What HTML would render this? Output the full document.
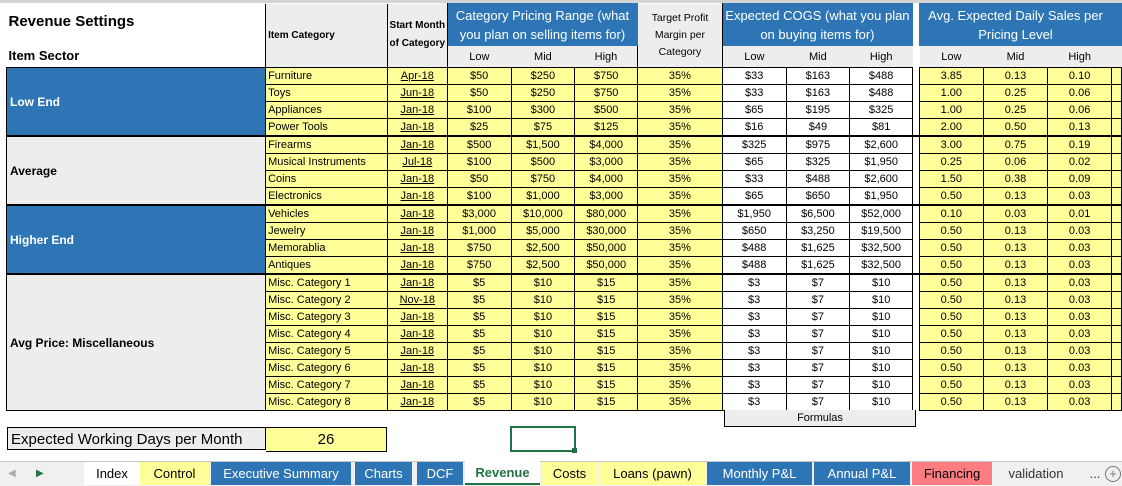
<!DOCTYPE html>
<html><head><meta charset="utf-8"><style>
body{margin:0;width:1122px;height:485px;overflow:hidden;background:#fff;font-family:"Liberation Sans",sans-serif;position:relative}
.grid{position:absolute;left:0;top:0;width:1122px;height:3px;background:#d4d4d4}
table{position:absolute;left:6px;top:3px;border-collapse:collapse;table-layout:fixed;font-size:11px}
td{padding:0;height:16px;text-align:center;border:1px solid #000;background:#ffff99;white-space:nowrap;overflow:hidden;line-height:16px;color:#000}
td.l{text-align:left;padding-left:2px}
td.w{background:#fff}
td.g{border:none;background:#fff}
td.u{text-decoration:underline}
.hb{background:#2e75b6;color:#fff;font-size:13px;line-height:19px;border:1px solid #2e75b6;white-space:normal;height:41px}
.hg{background:#ededed;border:1px solid #000;border-top:none;border-bottom:none;font-size:11px;line-height:17px;white-space:normal}
.sub{background:#ededed;border:none;font-size:11px;height:21px}
.sec1{background:#2e75b6;color:#fff;font-size:12px;font-weight:bold;text-align:left;padding-left:3px}
.sec2{background:#ededed;font-size:12px;font-weight:bold;text-align:left;padding-left:3px}
tr.t td{border-top:2px solid #000;height:15px}
.tabs{position:absolute;left:0;top:461px;width:1122px;height:24px;background:#f0f0f0;border-top:1px solid #c6c6c6;font-size:13px}
.tab{position:absolute;top:0;height:23px;line-height:23px;text-align:center;color:#fff}
</style></head><body>
<div class="grid"></div>
<table>
<colgroup><col style="width:260px"><col style="width:122px"><col style="width:60px"><col style="width:64px"><col style="width:64px"><col style="width:63px"><col style="width:85px"><col style="width:64px"><col style="width:64px"><col style="width:63px"><col style="width:7px"><col style="width:64px"><col style="width:65px"><col style="width:64px"><col style="width:10px"></colgroup>
<tr style="height:42px">
<td rowspan="2" style="background:#fff;border:none;border-bottom:1px solid #000;text-align:left;vertical-align:top;position:relative"><div style="position:absolute;left:2px;top:10px;font-size:15px;font-weight:bold">Revenue Settings</div><div style="position:absolute;left:2px;top:44px;font-size:13px;font-weight:bold">Item Sector</div></td>
<td rowspan="2" class="hg l" style="font-weight:bold;font-size:10px;border-left:1px solid #000">Item Category</td>
<td rowspan="2" class="hg" style="font-weight:bold;font-size:10px;line-height:18px">Start Month of Category</td>
<td colspan="3" class="hb">Category Pricing Range (what you plan on selling items for)</td>
<td rowspan="2" class="hg" style="font-size:10.5px">Target Profit Margin per Category</td>
<td colspan="3" class="hb">Expected COGS (what you plan on buying items for)</td>
<td rowspan="2" class="g"></td>
<td colspan="3" class="hb">Avg. Expected Daily Sales per Pricing Level</td>
<td class="hb"></td>
</tr>
<tr style="height:22px"><td class="sub">Low</td><td class="sub">Mid</td><td class="sub">High</td><td class="sub">Low</td><td class="sub">Mid</td><td class="sub">High</td><td class="sub">Low</td><td class="sub">Mid</td><td class="sub">High</td><td class="sub"></td></tr>

<tr><td rowspan="4" class="sec1">Low End</td><td class="l">Furniture</td><td class="u">Apr-18</td><td>$50</td><td>$250</td><td>$750</td><td>35%</td><td class="w">$33</td><td class="w">$163</td><td class="w">$488</td><td class="g"></td><td>3.85</td><td>0.13</td><td>0.10</td><td></td></tr>
<tr><td class="l">Toys</td><td class="u">Jun-18</td><td>$50</td><td>$250</td><td>$750</td><td>35%</td><td class="w">$33</td><td class="w">$163</td><td class="w">$488</td><td class="g"></td><td>1.00</td><td>0.25</td><td>0.06</td><td></td></tr>
<tr><td class="l">Appliances</td><td class="u">Jan-18</td><td>$100</td><td>$300</td><td>$500</td><td>35%</td><td class="w">$65</td><td class="w">$195</td><td class="w">$325</td><td class="g"></td><td>1.00</td><td>0.25</td><td>0.06</td><td></td></tr>
<tr><td class="l">Power Tools</td><td class="u">Jan-18</td><td>$25</td><td>$75</td><td>$125</td><td>35%</td><td class="w">$16</td><td class="w">$49</td><td class="w">$81</td><td class="g"></td><td>2.00</td><td>0.50</td><td>0.13</td><td></td></tr>

<tr class="t"><td rowspan="4" class="sec2">Average</td><td class="l">Firearms</td><td class="u">Jan-18</td><td>$500</td><td>$1,500</td><td>$4,000</td><td>35%</td><td class="w">$325</td><td class="w">$975</td><td class="w">$2,600</td><td class="g"></td><td>3.00</td><td>0.75</td><td>0.19</td><td></td></tr>
<tr><td class="l">Musical Instruments</td><td class="u">Jul-18</td><td>$100</td><td>$500</td><td>$3,000</td><td>35%</td><td class="w">$65</td><td class="w">$325</td><td class="w">$1,950</td><td class="g"></td><td>0.25</td><td>0.06</td><td>0.02</td><td></td></tr>
<tr><td class="l">Coins</td><td class="u">Jan-18</td><td>$50</td><td>$750</td><td>$4,000</td><td>35%</td><td class="w">$33</td><td class="w">$488</td><td class="w">$2,600</td><td class="g"></td><td>1.50</td><td>0.38</td><td>0.09</td><td></td></tr>
<tr><td class="l">Electronics</td><td class="u">Jan-18</td><td>$100</td><td>$1,000</td><td>$3,000</td><td>35%</td><td class="w">$65</td><td class="w">$650</td><td class="w">$1,950</td><td class="g"></td><td>0.50</td><td>0.13</td><td>0.03</td><td></td></tr>

<tr class="t"><td rowspan="4" class="sec1">Higher End</td><td class="l">Vehicles</td><td class="u">Jan-18</td><td>$3,000</td><td>$10,000</td><td>$80,000</td><td>35%</td><td class="w">$1,950</td><td class="w">$6,500</td><td class="w">$52,000</td><td class="g"></td><td>0.10</td><td>0.03</td><td>0.01</td><td></td></tr>
<tr><td class="l">Jewelry</td><td class="u">Jan-18</td><td>$1,000</td><td>$5,000</td><td>$30,000</td><td>35%</td><td class="w">$650</td><td class="w">$3,250</td><td class="w">$19,500</td><td class="g"></td><td>0.50</td><td>0.13</td><td>0.03</td><td></td></tr>
<tr><td class="l">Memorablia</td><td class="u">Jan-18</td><td>$750</td><td>$2,500</td><td>$50,000</td><td>35%</td><td class="w">$488</td><td class="w">$1,625</td><td class="w">$32,500</td><td class="g"></td><td>0.50</td><td>0.13</td><td>0.03</td><td></td></tr>
<tr><td class="l">Antiques</td><td class="u">Jan-18</td><td>$750</td><td>$2,500</td><td>$50,000</td><td>35%</td><td class="w">$488</td><td class="w">$1,625</td><td class="w">$32,500</td><td class="g"></td><td>0.50</td><td>0.13</td><td>0.03</td><td></td></tr>

<tr class="t"><td rowspan="8" class="sec2">Avg Price: Miscellaneous</td><td class="l">Misc. Category 1</td><td class="u">Jan-18</td><td>$5</td><td>$10</td><td>$15</td><td>35%</td><td class="w">$3</td><td class="w">$7</td><td class="w">$10</td><td class="g"></td><td>0.50</td><td>0.13</td><td>0.03</td><td></td></tr>
<tr><td class="l">Misc. Category 2</td><td class="u">Nov-18</td><td>$5</td><td>$10</td><td>$15</td><td>35%</td><td class="w">$3</td><td class="w">$7</td><td class="w">$10</td><td class="g"></td><td>0.50</td><td>0.13</td><td>0.03</td><td></td></tr>
<tr><td class="l">Misc. Category 3</td><td class="u">Jan-18</td><td>$5</td><td>$10</td><td>$15</td><td>35%</td><td class="w">$3</td><td class="w">$7</td><td class="w">$10</td><td class="g"></td><td>0.50</td><td>0.13</td><td>0.03</td><td></td></tr>
<tr><td class="l">Misc. Category 4</td><td class="u">Jan-18</td><td>$5</td><td>$10</td><td>$15</td><td>35%</td><td class="w">$3</td><td class="w">$7</td><td class="w">$10</td><td class="g"></td><td>0.50</td><td>0.13</td><td>0.03</td><td></td></tr>
<tr><td class="l">Misc. Category 5</td><td class="u">Jan-18</td><td>$5</td><td>$10</td><td>$15</td><td>35%</td><td class="w">$3</td><td class="w">$7</td><td class="w">$10</td><td class="g"></td><td>0.50</td><td>0.13</td><td>0.03</td><td></td></tr>
<tr><td class="l">Misc. Category 6</td><td class="u">Jan-18</td><td>$5</td><td>$10</td><td>$15</td><td>35%</td><td class="w">$3</td><td class="w">$7</td><td class="w">$10</td><td class="g"></td><td>0.50</td><td>0.13</td><td>0.03</td><td></td></tr>
<tr><td class="l">Misc. Category 7</td><td class="u">Jan-18</td><td>$5</td><td>$10</td><td>$15</td><td>35%</td><td class="w">$3</td><td class="w">$7</td><td class="w">$10</td><td class="g"></td><td>0.50</td><td>0.13</td><td>0.03</td><td></td></tr>
<tr><td class="l">Misc. Category 8</td><td class="u">Jan-18</td><td>$5</td><td>$10</td><td>$15</td><td>35%</td><td class="w">$3</td><td class="w">$7</td><td class="w">$10</td><td class="g"></td><td>0.50</td><td>0.13</td><td>0.03</td><td></td></tr>
</table>

<div style="position:absolute;left:724px;top:410px;width:190px;height:16px;background:#ededed;border:1px solid #000;border-top:none;font-size:11px;text-align:center;line-height:16px">Formulas</div>

<div style="position:absolute;left:7px;top:427px;height:23px;background:#ededed;border:1px solid #000;font-size:15px;line-height:23px;padding-left:3px;box-sizing:border-box;width:259px">Expected Working Days per Month</div>
<div style="position:absolute;left:266px;top:427px;width:120px;height:23px;background:#ffff99;border:1px solid #000;border-left:none;font-size:15px;line-height:23px;text-align:center">26</div>
<div style="position:absolute;left:510px;top:426px;width:62px;height:22px;border:2px solid #217346"></div>
<div style="position:absolute;left:572px;top:448px;width:5px;height:5px;background:#217346"></div>

<div class="tabs">
<div style="position:absolute;left:8px;top:0;line-height:23px;color:#aaa;font-size:10px">◀</div>
<div style="position:absolute;left:36px;top:0;line-height:23px;color:#217346;font-size:10px">▶</div>
<div class="tab" style="left:84px;width:56px;background:#fff;color:#000">Index</div>
<div class="tab" style="left:140px;width:69px;background:#ffff99;color:#000">Control</div>
<div class="tab" style="left:211px;width:140px;background:#2e75b6">Executive Summary</div>
<div class="tab" style="left:355px;width:57px;background:#2e75b6">Charts</div>
<div class="tab" style="left:417px;width:46px;background:#2e75b6">DCF</div>
<div class="tab" style="left:465px;width:75px;top:-1px;height:24px;background:#fff;color:#217346;font-weight:bold;border-bottom:2px solid #217346;box-sizing:border-box">Revenue</div>
<div class="tab" style="left:541px;width:57px;background:#ffff99;color:#000">Costs</div>
<div class="tab" style="left:599px;width:107px;background:#ffff99;color:#000">Loans (pawn)</div>
<div class="tab" style="left:707px;width:105px;background:#2e75b6">Monthly P&amp;L</div>
<div class="tab" style="left:814px;width:96px;background:#2e75b6">Annual P&amp;L</div>
<div class="tab" style="left:912px;width:80px;background:#ff7c80;color:#000">Financing</div>
<div class="tab" style="left:993px;width:86px;color:#333">validation</div>
<div class="tab" style="left:1082px;width:26px;color:#333">...</div>
<div style="position:absolute;left:1105px;top:4px;width:14px;height:14px;border:1px solid #777;border-radius:50%;color:#777;font-size:13px;line-height:14px;text-align:center">+</div>
</div>
</body></html>
